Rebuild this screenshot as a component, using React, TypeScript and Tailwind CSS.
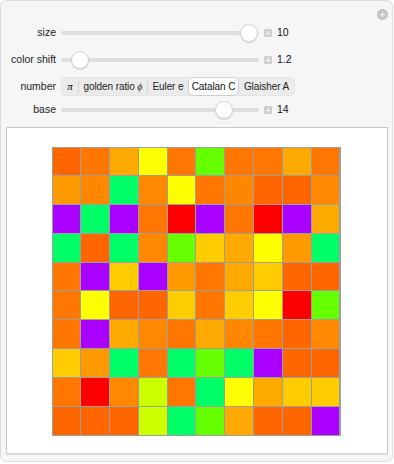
import React from "react";

const A = "#ff6600", B = "#ff7700", C = "#ff8800", D = "#ff9900", E = "#ffaa00", F = "#ffcc00", Y = "#ffff00";
const G = "#66ff00", L = "#ccff00", N = "#00ff66", P = "#aa00ff", R = "#ff0000";

const rows: string[][] = [
  [A, B, E, Y, B, G, B, B, E, B],
  [D, C, N, C, Y, B, C, A, A, C],
  [P, N, P, B, R, P, B, R, P, E],
  [N, A, N, C, G, F, E, Y, D, N],
  [B, P, F, P, D, B, E, F, A, A],
  [B, Y, A, A, F, B, F, Y, R, G],
  [B, P, E, C, B, E, C, B, A, C],
  [F, D, N, B, N, G, N, P, A, A],
  [B, R, C, L, B, N, Y, E, F, F],
  [A, A, A, L, N, G, E, A, A, P],
];

function PlusBox() {
  return (
    <div className="w-[8px] h-[8px] bg-[#cfcfcf] rounded-[1px] flex items-center justify-center relative">
      <div className="absolute w-[4px] h-[1px] bg-white" />
      <div className="absolute w-[1px] h-[4px] bg-white" />
    </div>
  );
}

function SliderRow({ label, pos, value, className }: { label: string; pos: number; value: string; className?: string }) {
  return (
    <div className={"flex items-center h-[18px] " + (className ?? "")}>
      <div className="w-[55px] text-right text-[#222]">{label}</div>
      <div className="relative ml-[5px] w-[198px] h-[18px] flex items-center">
        <div className="w-full h-[4px] rounded-full bg-[#dedede]" />
        <div
          className="absolute top-[0px] w-[18px] h-[18px] rounded-full bg-white border border-[#d4d4d4] shadow-[0_1px_1px_rgba(0,0,0,0.15)]"
          style={{ left: pos - 60 - 9 }}
        />
      </div>
      <div className="ml-[5px]">
        <PlusBox />
      </div>
      <div className="ml-[5px] text-[#111]">{value}</div>
    </div>
  );
}

function Divider() {
  return <div className="w-[1px] h-[12px] bg-[#d2d2d2]" />;
}

export default function App() {
  return (
    <div className="w-[394px] h-[464px] bg-white" style={{ fontFamily: '"Liberation Sans", Arial, sans-serif' }}>
      <div className="relative w-[393px] h-[462px] rounded-[6px] border border-[#dddddd] bg-[#f6f6f6] text-[10.5px]">
        <div className="absolute left-[376px] top-[8px] w-[11px] h-[11px] rounded-full bg-[#c4c4c4] flex items-center justify-center">
          <div className="absolute w-[5px] h-[1.5px] bg-white" />
          <div className="absolute w-[1.5px] h-[5px] bg-white" />
        </div>

        <SliderRow label="size" pos={248} value="10" className="mt-[23px]" />
        <SliderRow label="color shift" pos={79} value="1.2" className="mt-[9px]" />

        <div className="flex items-center h-[19px] mt-[8px]">
          <div className="w-[55px] text-right text-[#222]">number</div>
          <div className="ml-[5px] h-[19px] rounded-[5px] bg-[#ebebeb] border border-[#e4e4e4] flex items-center text-[10px] tracking-[-0.1px]">
            <div className="w-[16px] text-center italic" style={{ fontFamily: '"Liberation Serif", serif', fontSize: 11 }}>π</div>
            <Divider />
            <div className="w-[68px] text-center text-[#222]">
              golden ratio <span className="italic" style={{ fontFamily: '"Liberation Serif", serif' }}>ϕ</span>
            </div>
            <Divider />
            <div className="w-[40px] text-center text-[#222]">Euler e</div>
            <div className="h-[19px] w-[51px] flex items-center justify-center bg-white border border-[#cfcfcf] rounded-[5px] text-[#111]">Catalan C</div>
            <div className="w-[55px] text-center text-[#222]">Glaisher A</div>
          </div>
        </div>

        <SliderRow label="base" pos={223} value="14" className="mt-[5px]" />

        <div className="ml-[5px] mt-[8px] w-[382px] h-[328px] bg-white border border-[#c8c8c8] border-b-[2px] border-b-[#d8d8d8] flex items-center justify-center">
          <div className="ml-[-2px] mt-[1px] w-[289px] h-[289px] bg-[#9e9e9e] p-[1px] grid grid-cols-10 gap-[1px]">
            {rows.flat().map((c, i) => (
              <div key={i} style={{ backgroundColor: c }} />
            ))}
          </div>
        </div>
      </div>
    </div>
  );
}
